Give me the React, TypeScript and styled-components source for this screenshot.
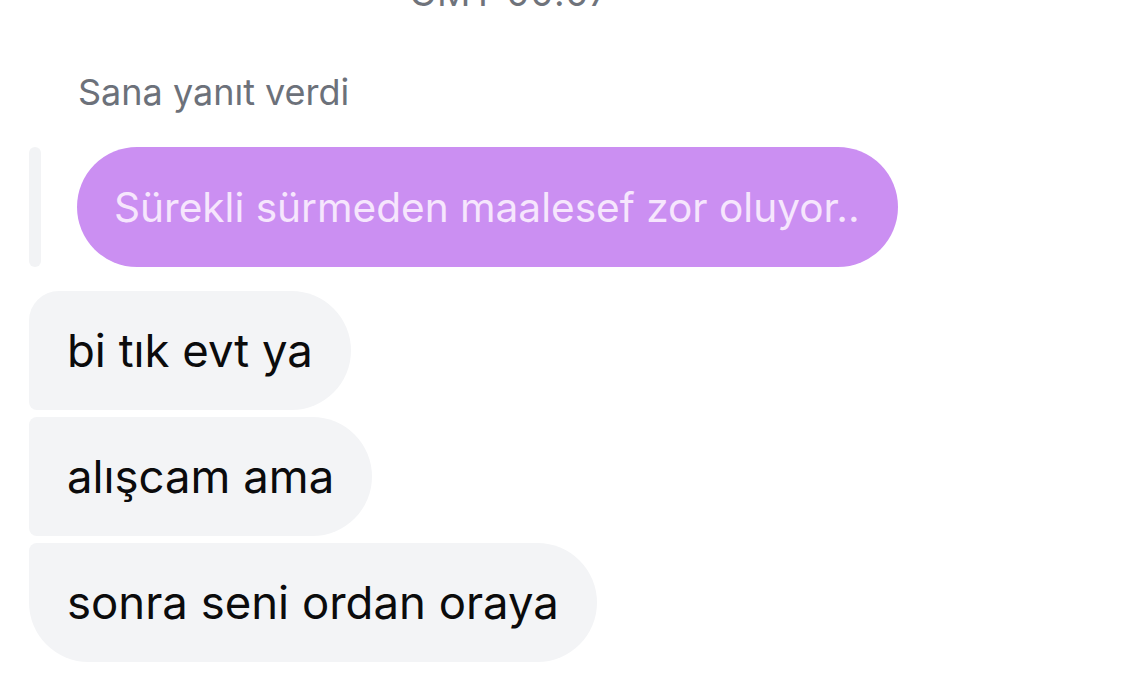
import React from "react";
import styled, { createGlobalStyle } from "styled-components";

const Global = createGlobalStyle`
  html, body { margin: 0; padding: 0; background: #ffffff; }
  body { font-family: Inter, "Noto Sans", "Liberation Sans", sans-serif; overflow: hidden; }
`;

const Page = styled.div`
  width: 1145px;
  height: 679px;
  overflow: hidden;
  display: flex;
  flex-direction: column;
  padding-left: 29px;
  box-sizing: border-box;
`;

const Timestamp = styled.div`
  margin-top: -25px;
  padding-left: 380px;
  height: 36px;
  line-height: 36px;
  font-size: 37px;
  color: #6f737b;
  letter-spacing: 0.5px;
`;

const ReplyLabel = styled.div`
  margin-top: 59px;
  padding-left: 49px;
  font-size: 36px;
  line-height: 44px;
  color: #6c717a;
`;

const ReplyRow = styled.div`
  margin-top: 33px;
  display: flex;
  gap: 36px;
  align-items: stretch;
`;

const ReplyBar = styled.div`
  width: 12px;
  border-radius: 6px;
  background: #f2f3f5;
`;

const QuotedBubble = styled.div`
  height: 120px;
  box-sizing: border-box;
  padding: 0 38px 0 37px;
  display: flex;
  align-items: center;
  border-radius: 60px;
  background: #cb8ff2;
  color: #f6e6fd;
  font-size: 40.6px;
`;

const Group = styled.div`
  margin-top: 24px;
  display: flex;
  flex-direction: column;
  align-items: flex-start;
  gap: 7px;
`;

const Bubble = styled.div<{ $tl: number; $bl: number }>`
  height: 119px;
  box-sizing: border-box;
  padding: 0 38px;
  display: flex;
  align-items: center;
  background: #f3f4f6;
  color: #0b0b0c;
  font-size: 45.5px;
  border-radius: ${(p) => `${p.$tl}px 60px 60px ${p.$bl}px`};
`;

const messages = [
  { text: "bi tık evt ya", tl: 30, bl: 8 },
  { text: "alışcam ama", tl: 8, bl: 8 },
  { text: "sonra seni ordan oraya", tl: 8, bl: 60 },
];

export default function App() {
  return (
    <>
      <Global />
      <Page>
        <Timestamp>GMT 00:07</Timestamp>
        <ReplyLabel>Sana yanıt verdi</ReplyLabel>
        <ReplyRow>
          <ReplyBar />
          <QuotedBubble>Sürekli sürmeden maalesef zor oluyor..</QuotedBubble>
        </ReplyRow>
        <Group>
          {messages.map((m) => (
            <Bubble key={m.text} $tl={m.tl} $bl={m.bl}>
              {m.text}
            </Bubble>
          ))}
        </Group>
      </Page>
    </>
  );
}
